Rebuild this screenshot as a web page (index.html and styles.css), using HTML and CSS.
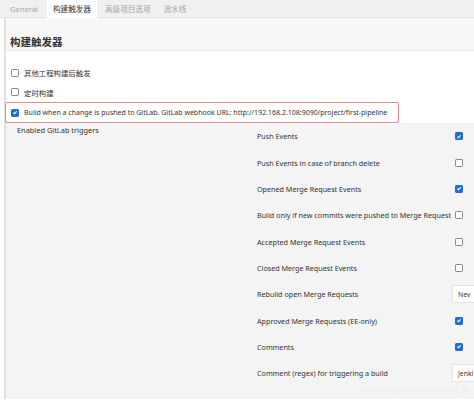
FILE: index.html
```html
<!DOCTYPE html>
<html lang="zh">
<head>
<meta charset="utf-8">
<link rel="stylesheet" href="styles.css">
</head>
<body>
<div class="tabs">
  <div class="tab">General</div>
  <div class="tab active">构建触发器</div>
  <div class="tab">高级项目选项</div>
  <div class="tab">流水线</div>
</div>
<div class="page">
  <div class="section-head"><h2>构建触发器</h2></div>
  <div class="options">
    <div class="opt"><span class="cb"></span><span>其他工程构建后触发</span></div>
    <div class="opt"><span class="cb"></span><span>定时构建</span></div>
    <div class="opt hl"><span class="cb on"><svg viewBox="0 0 8 8"><path d="M1.8 4.2 L3.3 5.6 L6.2 2.4" /></svg></span><span class="hl-text">Build when a change is pushed to GitLab. GitLab webhook URL: http://192.168.2.108:9090/project/first-pipeline</span></div>
  </div>
  <div class="panel">
    <div class="panel-label">Enabled GitLab triggers</div>
    <div class="rows">
      <div class="row"><span class="lbl">Push Events</span><span class="cb on"><svg viewBox="0 0 8 8"><path d="M1.8 4.2 L3.3 5.6 L6.2 2.4" /></svg></span></div>
      <div class="row"><span class="lbl">Push Events in case of branch delete</span><span class="cb"></span></div>
      <div class="row"><span class="lbl">Opened Merge Request Events</span><span class="cb on"><svg viewBox="0 0 8 8"><path d="M1.8 4.2 L3.3 5.6 L6.2 2.4" /></svg></span></div>
      <div class="row"><span class="lbl">Build only if new commits were pushed to Merge Request</span><span class="cb"></span></div>
      <div class="row"><span class="lbl">Accepted Merge Request Events</span><span class="cb"></span></div>
      <div class="row"><span class="lbl">Closed Merge Request Events</span><span class="cb"></span></div>
      <div class="row"><span class="lbl">Rebuild open Merge Requests</span><span class="field">Nev</span></div>
      <div class="row"><span class="lbl">Approved Merge Requests (EE-only)</span><span class="cb on"><svg viewBox="0 0 8 8"><path d="M1.8 4.2 L3.3 5.6 L6.2 2.4" /></svg></span></div>
      <div class="row"><span class="lbl">Comments</span><span class="cb on"><svg viewBox="0 0 8 8"><path d="M1.8 4.2 L3.3 5.6 L6.2 2.4" /></svg></span></div>
      <div class="row"><span class="lbl">Comment (regex) for triggering a build</span><span class="field">Jenki</span></div>
    </div>
    <div class="watermark">https://blog.csdn.net/weixin_43</div>
  </div>
</div>
</body>
</html>
```
FILE: styles.css
```css
html, body {
  margin: 0;
  padding: 0;
  background: #ffffff;
}
body {
  width: 474px;
  height: 401px;
  overflow: hidden;
  font-family: "Noto Sans", "Noto Sans CJK SC", sans-serif;
  font-size: 7.4px;
  color: #333333;
}
.tabs {
  display: flex;
  height: 18px;
  background: #f0f0f0;
  border-bottom: 1px solid #e3e3e3;
  padding-left: 5px;
  box-sizing: border-box;
}
.tab {
  height: 18px;
  line-height: 18px;
  padding: 0 5px;
  color: #a6a6a6;
  font-size: 7.6px;
  margin-right: 3px;
}
.tab.active {
  background: #ffffff;
  color: #333333;
  padding: 0 6px;
  margin: 0 3px 0 1px;
}
.page {
  margin-left: 4px;
  border-left: 2px solid #e1e1e1;
  height: 381px;
  box-sizing: border-box;
}
.section-head {
  height: 33px;
  background: #f7f7f7;
  border-bottom: 1px solid #e8e8e8;
  box-sizing: border-box;
  display: flex;
  align-items: flex-end;
  padding: 0 0 1px 4px;
}
.section-head h2 {
  margin: 0;
  font-size: 10.5px;
  font-weight: 700;
  color: #333333;
  line-height: 14px;
}
.options {
  padding-top: 12px;
}
.opt {
  display: flex;
  align-items: center;
  gap: 5px;
  height: 19.5px;
  padding-left: 5px;
  white-space: nowrap;
}
.opt.hl {
  height: 21px;
  width: 394px;
  box-sizing: border-box;
  border: 1px solid #e58c8c;
  border-radius: 2px;
  margin-left: -1px;
  padding-left: 5px;
}
.hl-text {
  font-size: 7px;
}
.cb {
  width: 6px;
  height: 6px;
  border: 0.8px solid #8a8a8a;
  border-radius: 1.2px;
  background: #ffffff;
  flex: none;
  display: flex;
  align-items: center;
  justify-content: center;
}
.cb.on {
  background: #1f6ed8;
  border-color: #1f6ed8;
}
.cb svg {
  width: 7px;
  height: 7px;
}
.cb svg path {
  fill: none;
  stroke: #ffffff;
  stroke-width: 1.4;
}
.panel {
  position: relative;
  background: #f4f4f4;
  display: flex;
  height: 276px;
}
.panel-label {
  width: 251px;
  padding: 2px 0 0 11px;
  box-sizing: border-box;
  flex: none;
}
.rows {
  flex: 1;
}
.row {
  display: flex;
  align-items: center;
  justify-content: space-between;
  height: 26.35px;
  padding-right: 11px;
  white-space: nowrap;
  font-size: 7.2px;
}
.field {
  width: 22px;
  height: 18px;
  line-height: 17px;
  background: #ffffff;
  border: 1px solid #e3e3e3;
  border-right: none;
  padding-left: 5px;
  margin-right: -11px;
  box-sizing: border-box;
  font-size: 6.8px;
  flex: none;
}
.watermark {
  position: absolute;
  right: 4px;
  bottom: 5px;
  color: rgba(0, 0, 0, 0.08);
  font-size: 7.4px;
}
```
